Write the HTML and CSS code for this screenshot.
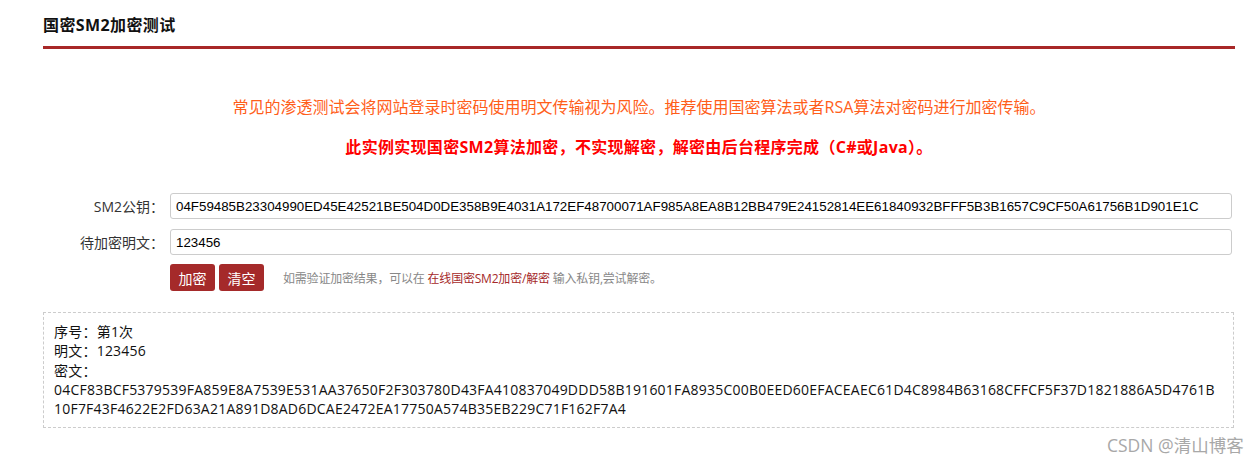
FILE: index.html
```html
<!DOCTYPE html>
<html lang="zh-CN">
<head>
<meta charset="utf-8">
<title>国密SM2加密测试</title>
<link rel="stylesheet" href="styles.css">
</head>
<body>
<div class="page">
  <div class="header">
    <h1 class="title">国密SM2加密测试</h1>
  </div>
  <div class="intro">
    <p class="notice">常见的渗透测试会将网站登录时密码使用明文传输视为风险。推荐使用国密算法或者RSA算法对密码进行加密传输。</p>
    <p class="warning">此实例实现国密SM2算法加密，不实现解密，解密由后台程序完成（C#或Java）。</p>
  </div>
  <div class="form">
    <div class="row">
      <label class="label">SM2公钥：</label>
      <input class="input" type="text" value="04F59485B23304990ED45E42521BE504D0DE358B9E4031A172EF48700071AF985A8EA8B12BB479E24152814EE61840932BFFF5B3B1657C9CF50A61756B1D901E1C">
    </div>
    <div class="row">
      <label class="label">待加密明文：</label>
      <input class="input" type="text" value="123456">
    </div>
    <div class="row">
      <span class="label"></span>
      <div class="actions">
        <button class="btn">加密</button>
        <button class="btn">清空</button>
        <span class="hint">如需验证加密结果，可以在 <a class="link" href="#">在线国密SM2加密/解密</a> 输入私钥,尝试解密。</span>
      </div>
    </div>
  </div>
  <div class="result">
    <div class="line">序号：第1次</div>
    <div class="line">明文：123456</div>
    <div class="line">密文：</div>
    <div class="line cipher">04CF83BCF5379539FA859E8A7539E531AA37650F2F303780D43FA410837049DDD58B191601FA8935C00B0EED60EFACEAEC61D4C8984B63168CFFCF5F37D1821886A5D4761B</div>
    <div class="line cipher">10F7F43F4622E2FD63A21A891D8AD6DCAE2472EA17750A574B35EB229C71F162F7A4</div>
  </div>
</div>
<div class="watermark">CSDN @清山博客</div>
</body>
</html>
```

FILE: styles.css
```css
html, body {
  margin: 0;
  padding: 0;
  background: #fff;
}
body {
  font-family: "Open Sans", "Noto Sans CJK SC", sans-serif;
  color: #333;
  position: relative;
  width: 1259px;
  height: 463px;
  overflow: hidden;
}
.page {
  padding: 0 24px 0 43px;
}
.header {
  height: 42px;
  padding-top: 4px;
  border-bottom: 3px solid #a82828;
  display: flex;
  align-items: center;
}
.title {
  margin: 0;
  font-size: 16px;
  font-weight: bold;
  color: #111;
  line-height: 42px;
  letter-spacing: 0.4px;
}
.intro {
  margin-top: 46px;
  text-align: center;
}
.notice {
  margin: 0;
  font-size: 16px;
  line-height: 24px;
  color: #ff5e1a;
}
.warning {
  margin: 16px 0 0;
  font-size: 16px;
  line-height: 24px;
  font-weight: bold;
  color: #f00;
  letter-spacing: 0.3px;
}
.form {
  margin-top: 34px;
  display: flex;
  flex-direction: column;
  gap: 10px;
}
.row {
  display: grid;
  grid-template-columns: 121px 1fr;
  column-gap: 6px;
  align-items: center;
  padding-right: 3px;
}
.row:last-child {
  margin-top: -1px;
}
.label {
  text-align: right;
  font-size: 14px;
  color: #333;
}
.input {
  height: 26px;
  box-sizing: border-box;
  border: 1px solid #ccc;
  border-radius: 3px;
  padding: 0 5px;
  font-family: "Liberation Sans", Arial, sans-serif;
  font-size: 13.33px;
  color: #000;
  outline: none;
}
.actions {
  display: flex;
  align-items: center;
  gap: 4px;
}
.btn {
  width: 45px;
  height: 27px;
  border: none;
  border-radius: 3px;
  background: #a52a2a;
  color: #fff;
  font-family: "Noto Sans CJK SC", sans-serif;
  font-size: 14px;
  padding: 0;
  cursor: pointer;
}
.hint {
  margin-left: 15px;
  font-size: 12px;
  color: #888;
  letter-spacing: -0.2px;
}
.link {
  color: #a52a2a;
  text-decoration: none;
}
.result {
  margin-top: 21px;
  margin-right: 1px;
  border: 1px dashed #ccc;
  padding: 9px 10px;
  font-size: 14px;
  line-height: 19.3px;
  color: #111;
  letter-spacing: 0.22px;
}
.cipher {
  white-space: nowrap;
}
.watermark {
  position: absolute;
  left: 1107px;
  top: 432px;
  font-family: "Open Sans", "Noto Sans CJK SC", sans-serif;
  font-size: 17.5px;
  line-height: 26px;
  color: #a8a8a8;
}
```
